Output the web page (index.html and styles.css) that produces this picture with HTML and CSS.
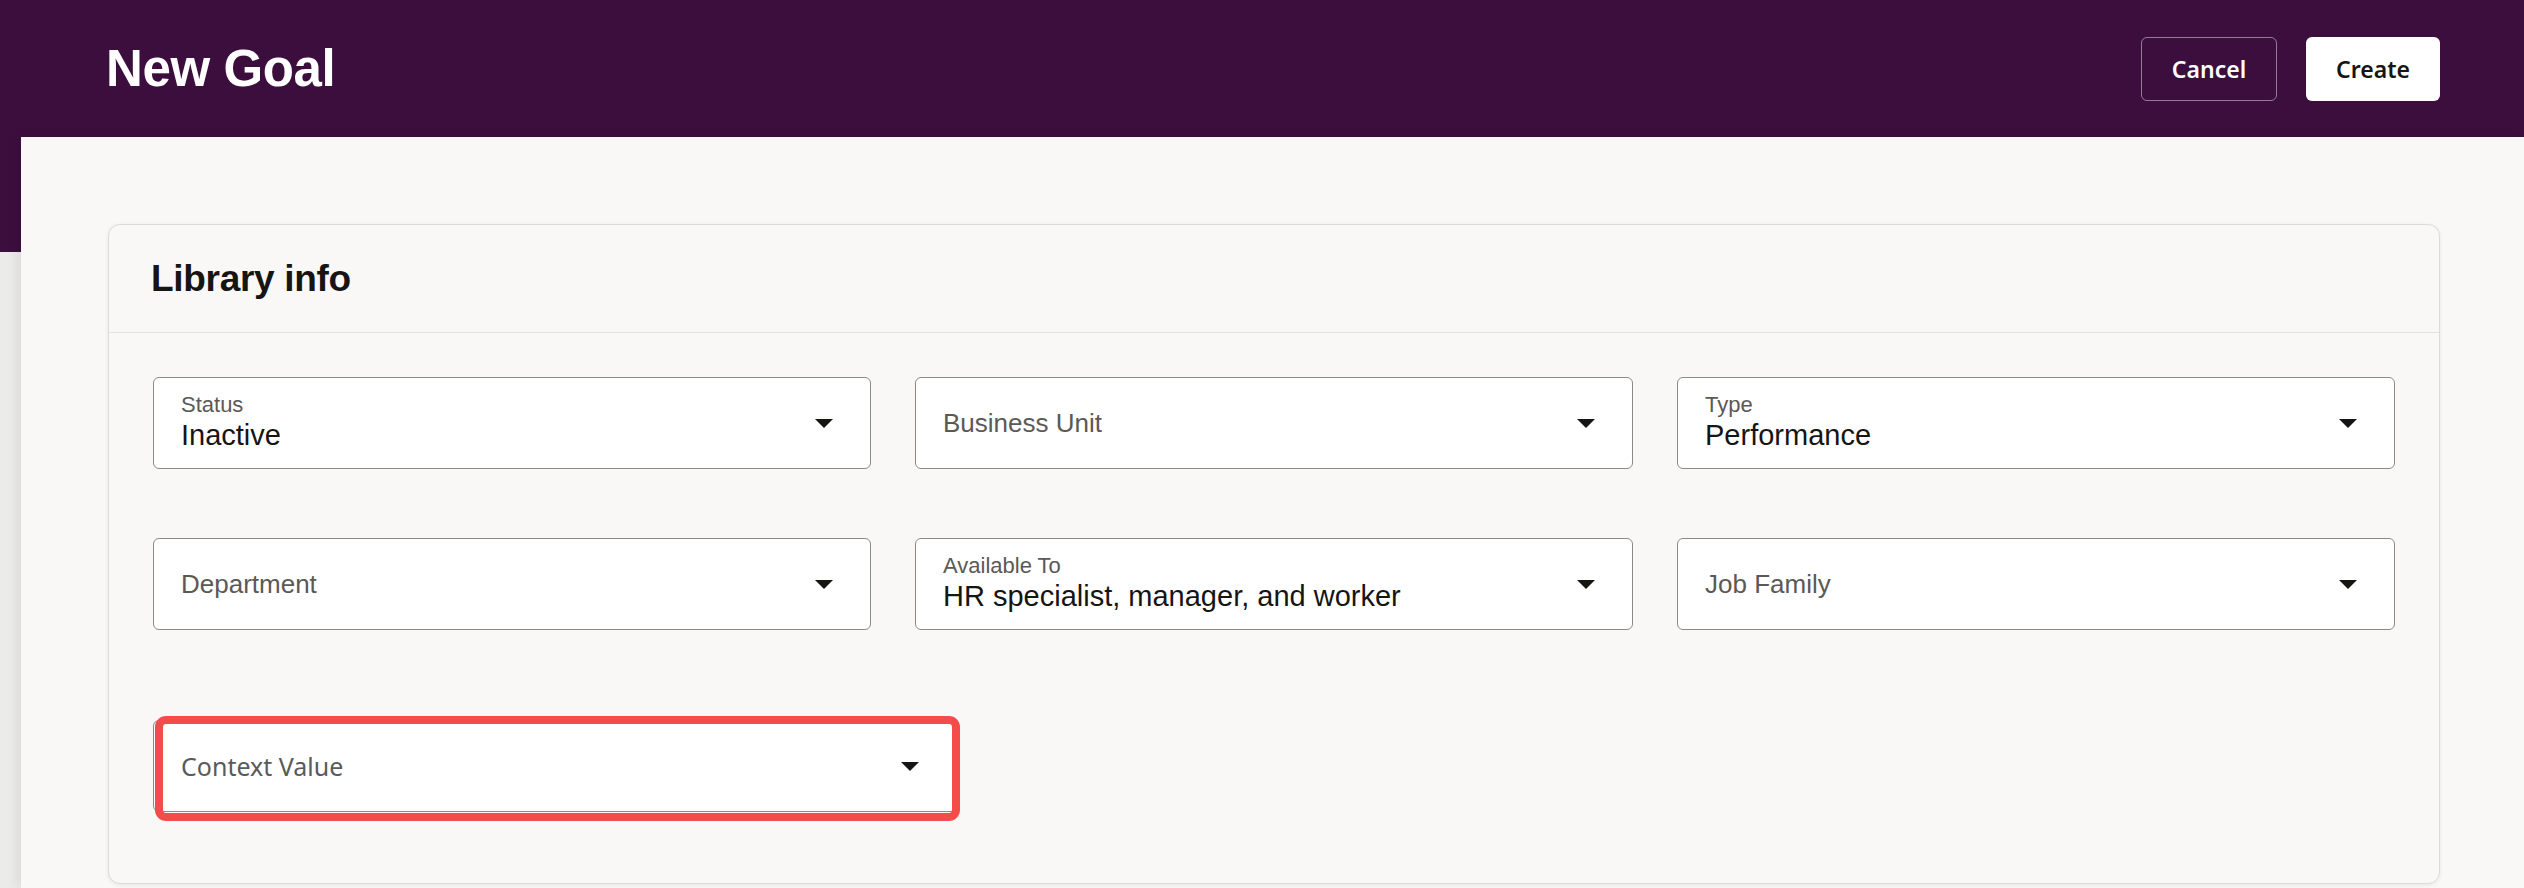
FILE: index.html
```html
<!DOCTYPE html>
<html lang="en">
<head>
    <meta charset="UTF-8">
    <meta name="viewport" content="width=device-width, initial-scale=1.0">
    <title>New Goal</title>
    <link rel="stylesheet" href="styles.css">
</head>
<body>
    <header class="topbar">
        <h1>New Goal</h1>
        <div class="actions">
            <button class="btn-cancel">Cancel</button>
            <button class="btn-create">Create</button>
        </div>
    </header>

    <div class="shell">
        <main class="main">
            <section class="card">
                <div class="card-head">
                    <h2>Library info</h2>
                </div>
                <div class="card-body">
                    <div class="fields">
                        <div class="field">
                            <div class="field-text">
                                <span class="label">Status</span>
                                <span class="value">Inactive</span>
                            </div>
                            <span class="arrow"></span>
                        </div>
                        <div class="field">
                            <span class="placeholder">Business Unit</span>
                            <span class="arrow"></span>
                        </div>
                        <div class="field">
                            <div class="field-text">
                                <span class="label">Type</span>
                                <span class="value">Performance</span>
                            </div>
                            <span class="arrow"></span>
                        </div>
                        <div class="field">
                            <span class="placeholder">Department</span>
                            <span class="arrow"></span>
                        </div>
                        <div class="field">
                            <div class="field-text">
                                <span class="label">Available To</span>
                                <span class="value">HR specialist, manager, and worker</span>
                            </div>
                            <span class="arrow"></span>
                        </div>
                        <div class="field">
                            <span class="placeholder">Job Family</span>
                            <span class="arrow"></span>
                        </div>
                    </div>

                    <!-- context segment -->
                    <div class="field field-context">
                        <span class="placeholder context">Context Value</span>
                        <span class="arrow"></span>
                    </div>
                </div>
            </section>
        </main>
    </div>
</body>
</html>
```

FILE: styles.css
```css
body{
    margin: 0;
    background-color: #ebebea;
    font-family: 'Liberation Sans', Arial, sans-serif;
    overflow: hidden;
}
.topbar{
    height: 137px;
    background-color: #3b0e3e;
    display: flex;
    align-items: center;
    justify-content: space-between;
    padding: 0 84px 0 106px;
}
.topbar h1{
    margin: 0;
    color: #fff;
    font-size: 51px;
    font-weight: bold;
    letter-spacing: -0.4px;
}
.actions{
    display: flex;
    gap: 29px;
}
.actions button{
    height: 64px;
    border-radius: 6px;
    font-family: 'Noto Sans', sans-serif;
    font-size: 23px;
    font-weight: 600;
    cursor: pointer;
}
.btn-cancel{
    width: 136px;
    background: transparent;
    border: 1px solid rgba(255, 255, 255, 0.45);
    color: #fff;
}
.btn-create{
    width: 134px;
    background: #fff;
    border: none;
    color: #161513;
}
.shell{
    padding-left: 21px;
    background: linear-gradient(#3b0e3e 0 115px, transparent 115px);
    height: 751px;
}
.main{
    height: 100%;
    box-sizing: border-box;
    background-color: #f9f8f6;
    padding: 87px 84px 0 87px;
    box-shadow: -6px 0 10px rgba(0, 0, 0, 0.06);
}
.card{
    background-color: #f9f8f6;
    border: 1px solid #dddbd8;
    border-radius: 12px;
    box-shadow: 0 1px 4px rgba(0, 0, 0, 0.07);
    height: 660px;
    box-sizing: border-box;
}
.card-head{
    height: 107px;
    display: flex;
    align-items: center;
    padding: 0 42px;
    border-bottom: 1px solid #e4e2df;
}
.card-head h2{
    margin: 0;
    font-size: 37px;
    font-weight: bold;
    color: #161513;
    letter-spacing: -0.3px;
}
.card-body{
    padding: 44px;
}
.fields{
    display: grid;
    grid-template-columns: repeat(3, 1fr);
    gap: 69px 44px;
}
.field{
    height: 92px;
    box-sizing: border-box;
    background: #fff;
    border: 1px solid #8c8a87;
    border-radius: 6px;
    display: flex;
    align-items: center;
    justify-content: space-between;
    padding: 0 37px 0 27px;
}
.field-text{
    display: flex;
    flex-direction: column;
    padding-bottom: 4px;
}
.label{
    font-size: 22px;
    line-height: 28px;
    color: #5b5956;
}
.value{
    font-size: 29px;
    line-height: 32px;
    color: #161513;
}
.placeholder{
    font-size: 26px;
    color: #5b5956;
}
.arrow{
    width: 0;
    height: 0;
    border-left: 9px solid transparent;
    border-right: 9px solid transparent;
    border-top: 9px solid #161513;
}
.field-context{
    position: relative;
    width: 804px;
    margin-top: 90px;
}
.field-context::after{
    content: "";
    position: absolute;
    top: -5px;
    left: 1px;
    right: -4px;
    bottom: -10px;
    border: 8px solid #f44c4a;
    border-radius: 11px;
}
.placeholder.context{
    font-family: 'Noto Sans', sans-serif;
    font-size: 25px;
    color: #5a5a5a;
}
```
